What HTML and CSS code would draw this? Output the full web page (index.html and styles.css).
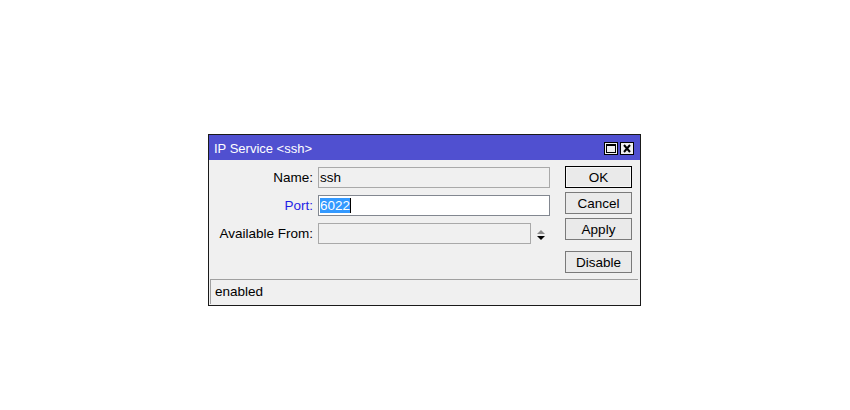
FILE: index.html
```html
<!DOCTYPE html>
<html lang="en">
<head>
  <meta charset="UTF-8">
  <title>IP Service &lt;ssh&gt;</title>
  <link rel="stylesheet" href="styles.css">
</head>
<body>

  <div class="window">
    <div class="titlebar">
      <span class="title">IP Service &lt;ssh&gt;</span>
      <div class="title-buttons">
        <span class="tbtn">
          <svg width="10" height="9" viewBox="0 0 10 9"><rect x="0.5" y="0.5" width="9" height="8" fill="none" stroke="#000" stroke-width="1"/><line x1="0" y1="1" x2="10" y2="1" stroke="#000" stroke-width="2"/></svg>
        </span>
        <span class="tbtn">
          <svg width="10" height="9" viewBox="0 0 10 9"><path d="M2 1 L8 8 M8 1 L2 8" stroke="#000" stroke-width="2"/></svg>
        </span>
      </div>
    </div>

    <div class="content">
      <div class="form">
        <div class="row">
          <label>Name:</label>
          <div class="field disabled">ssh</div>
        </div>
        <div class="row">
          <label class="changed">Port:</label>
          <div class="field"><span class="sel">6022</span><span class="caret"></span></div>
        </div>
        <div class="row">
          <label>Available From:</label>
          <div class="field disabled short"></div>
          <span class="spin">
            <svg width="10" height="12" viewBox="0 0 10 12"><path d="M5 1 L9 5 L1 5 Z" fill="#8a8a8a"/><path d="M1 7 L9 7 L5 11 Z" fill="#000"/></svg>
          </span>
        </div>
      </div>

      <div class="buttons">
        <button class="default">OK</button>
        <button>Cancel</button>
        <button>Apply</button>
        <button class="spaced">Disable</button>
      </div>
    </div>

    <div class="status">enabled</div>
  </div>

</body>
</html>
```

FILE: styles.css
```css
body {
  margin: 0;
  padding: 134px 0 0 208px;
  background: #fff;
  font-family: "Liberation Sans", Arial, sans-serif;
  font-size: 13.5px;
  color: #000;
}

.window {
  width: 431px;
  height: 170px;
  border: 1px solid #1a1a1a;
  background: #f0f0f0;
  display: flex;
  flex-direction: column;
}

.titlebar {
  height: 25px;
  background: #5050d0;
  color: #fff;
  font-size: 13px;
  display: flex;
  align-items: center;
  justify-content: space-between;
  padding: 0 6px 0 5px;
}

.title {
  padding-top: 1px;
}

.title-buttons {
  display: flex;
  gap: 2px;
  padding-top: 1px;
}

.tbtn {
  width: 14px;
  height: 13px;
  box-sizing: border-box;
  border: 1px solid #000;
  background: #f0f0f0;
  display: flex;
  align-items: center;
  justify-content: center;
}

.tbtn svg {
  display: block;
}

.content {
  display: flex;
  justify-content: space-between;
  padding: 6px 8px 0 0;
  flex: 1;
}

.form {
  display: flex;
  flex-direction: column;
  gap: 7px;
  padding-top: 1px;
}

.row {
  display: flex;
  align-items: center;
  height: 21px;
}

.row label {
  width: 104px;
  text-align: right;
  padding-right: 5px;
}

.row label.changed {
  color: #1e1ee6;
}

.field {
  width: 232px;
  height: 21px;
  box-sizing: border-box;
  border: 1px solid #828790;
  background: #fff;
  display: flex;
  align-items: center;
  padding-left: 1px;
}

.field.disabled {
  background: #f0f0f0;
  border-color: #a9a9a9;
}

.field.short {
  width: 213px;
}

.sel {
  background: #3399ff;
  color: #fff;
  line-height: 15px;
}

.caret {
  width: 1px;
  height: 15px;
  background: #000;
}

.spin {
  margin-left: 5px;
  display: flex;
  padding-top: 3px;
}

.buttons {
  display: flex;
  flex-direction: column;
  gap: 4px;
}

button {
  width: 67px;
  height: 22px;
  border: 1px solid #7a7a7a;
  background: #eaeaea;
  font-family: inherit;
  font-size: 13.5px;
  color: #000;
  padding: 0;
}

button.default {
  border: 1px solid #000;
  box-shadow: inset 0 0 0 1px #f7f7f7;
}

button.spaced {
  margin-top: 7px;
}

.status {
  height: 25px;
  box-sizing: border-box;
  margin: 0 2px 1px 1px;
  border-top: 1px solid #a0a0a0;
  border-left: 1px solid #a0a0a0;
  display: flex;
  align-items: center;
  padding: 0 0 2px 4px;
}
```
